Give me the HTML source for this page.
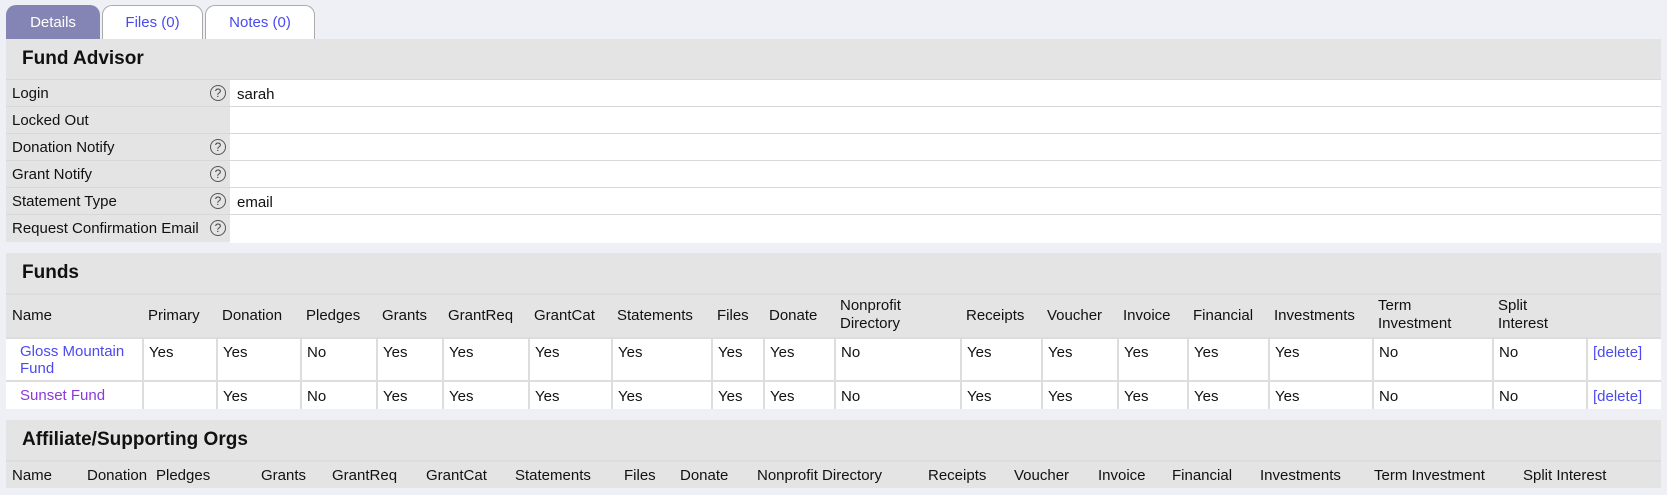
<!DOCTYPE html>
<html><head><meta charset="utf-8"><style>
*{margin:0;padding:0;box-sizing:border-box}
body{width:1667px;height:495px;background:#eff0f5;font-family:"Liberation Sans",sans-serif;font-size:15px;color:#111;position:relative;overflow:hidden}
.a{position:absolute}
.tab{position:absolute;top:5px;height:34px;border:1px solid #aaa;border-bottom:none;border-radius:10px 10px 0 0;background:#fff;color:#4a4af0;text-align:center;line-height:33px;font-size:15px}
.sec{position:absolute;left:6px;width:1655px;background:#e4e4e4}
.h{font-weight:bold;font-size:19px;padding-left:16px}
.row{position:absolute;left:0;width:1655px;height:27px;border-top:1px solid #d8d8d8}
.lab{position:absolute;left:6px;top:5px}
.val{position:absolute;left:224px;top:0;right:0;height:26px;background:#fff;padding:6px 0 0 7px}
.q{position:absolute;left:204px;top:5px;width:16px;height:16px;border:1.3px solid #555;border-radius:50%;font-size:12px;line-height:14px;text-align:center;color:#444}
</style></head><body>
<div class="tab" style="left:6px;width:94px;background:#8585b5;border-color:#8585b5;color:#fff">Details</div>
<div class="tab" style="left:102px;width:101px">Files (0)</div>
<div class="tab" style="left:205px;width:110px">Notes (0)</div>

<div class="sec" style="top:39px;height:203px">
<div class="h" style="line-height:40px">Fund Advisor</div>
<div class="row" style="top:40px"><span class="lab">Login</span><span class="q">?</span><div class="val">sarah</div></div>
<div class="row" style="top:67px"><span class="lab">Locked Out</span><div class="val"></div></div>
<div class="row" style="top:94px"><span class="lab">Donation Notify</span><span class="q">?</span><div class="val"></div></div>
<div class="row" style="top:121px"><span class="lab">Grant Notify</span><span class="q">?</span><div class="val"></div></div>
<div class="row" style="top:148px"><span class="lab">Statement Type</span><span class="q">?</span><div class="val">email</div></div>
<div class="row" style="top:175px;height:28px"><span class="lab">Request Confirmation Email</span><span class="q">?</span><div class="val" style="height:28px"></div></div>
</div>

<div class="sec" style="top:253px;height:156px">
<div class="h" style="line-height:40px">Funds</div>
<div class="a" style="top:40px;left:0;width:1655px;height:44px;border-top:2px solid #ddd"></div>
</div>

<div class="sec" style="top:420px;height:68px">
<div class="h" style="line-height:40px">Affiliate/Supporting Orgs</div>
<div class="a" style="top:40px;left:0;width:1655px;border-top:2px solid #ddd"></div>
<div class="a" style="top:47px;left:6px">Name</div>
<div class="a" style="top:47px;left:81px">Donation</div>
<div class="a" style="top:47px;left:150px">Pledges</div>
<div class="a" style="top:47px;left:255px">Grants</div>
<div class="a" style="top:47px;left:326px">GrantReq</div>
<div class="a" style="top:47px;left:420px">GrantCat</div>
<div class="a" style="top:47px;left:509px">Statements</div>
<div class="a" style="top:47px;left:618px">Files</div>
<div class="a" style="top:47px;left:674px">Donate</div>
<div class="a" style="top:47px;left:751px">Nonprofit Directory</div>
<div class="a" style="top:47px;left:922px">Receipts</div>
<div class="a" style="top:47px;left:1008px">Voucher</div>
<div class="a" style="top:47px;left:1092px">Invoice</div>
<div class="a" style="top:47px;left:1166px">Financial</div>
<div class="a" style="top:47px;left:1254px">Investments</div>
<div class="a" style="top:47px;left:1368px">Term Investment</div>
<div class="a" style="top:47px;left:1517px">Split Interest</div>
</div>

<div class="a" style="left:6px;top:293px;width:1655px;height:116px">
<div class="a" style="top:14px;left:6px">Name</div>
<div class="a" style="top:14px;left:142px">Primary</div>
<div class="a" style="top:14px;left:216px">Donation</div>
<div class="a" style="top:14px;left:300px">Pledges</div>
<div class="a" style="top:14px;left:376px">Grants</div>
<div class="a" style="top:14px;left:442px">GrantReq</div>
<div class="a" style="top:14px;left:528px">GrantCat</div>
<div class="a" style="top:14px;left:611px">Statements</div>
<div class="a" style="top:14px;left:711px">Files</div>
<div class="a" style="top:14px;left:763px">Donate</div>
<div class="a" style="top:4px;left:834px;line-height:18px">Nonprofit<br>Directory</div>
<div class="a" style="top:14px;left:960px">Receipts</div>
<div class="a" style="top:14px;left:1041px">Voucher</div>
<div class="a" style="top:14px;left:1117px">Invoice</div>
<div class="a" style="top:14px;left:1187px">Financial</div>
<div class="a" style="top:14px;left:1268px">Investments</div>
<div class="a" style="top:4px;left:1372px;line-height:18px">Term<br>Investment</div>
<div class="a" style="top:4px;left:1492px;line-height:18px">Split<br>Interest</div>
<div class="a" style="top:44px;left:0;width:1655px;height:44px;background:#fff;border-top:2px solid #ddd"></div>
<div class="a" style="top:87px;left:0;width:1655px;height:29px;background:#fff;border-top:2px solid #ddd"></div>
</div>
<div class="a" style="left:6px;top:337px;width:1655px;height:72px">
<div class="a" style="left:14px;top:6px;line-height:17px;color:#4a4af0">Gloss Mountain<br>Fund</div>
<div class="a" style="left:14px;top:50px;color:#8a3ad8">Sunset Fund</div>
</div>
<div id="cols"></div>
<script>
var b=[142,216,300,376,442,528,611,711,763,834,960,1041,1117,1187,1268,1372,1492,1586];
var r1=["Yes","Yes","No","Yes","Yes","Yes","Yes","Yes","Yes","No","Yes","Yes","Yes","Yes","Yes","No","No","[delete]"];
var r2=["","Yes","No","Yes","Yes","Yes","Yes","Yes","Yes","No","Yes","Yes","Yes","Yes","Yes","No","No","[delete]"];
var h="";
for(var i=0;i<b.length;i++){
 h+='<div class="a" style="left:'+b[i]+'px;top:338px;width:2px;height:71px;background:#ddd"></div>';
 var cl=i==17?'color:#4a4af0;':'';
 h+='<div class="a" style="left:'+(b[i]+7)+'px;top:344px;'+cl+'">'+r1[i]+'</div>';
 h+='<div class="a" style="left:'+(b[i]+7)+'px;top:388px;'+cl+'">'+r2[i]+'</div>';
}
document.getElementById("cols").innerHTML=h;
</script>
</body></html>
